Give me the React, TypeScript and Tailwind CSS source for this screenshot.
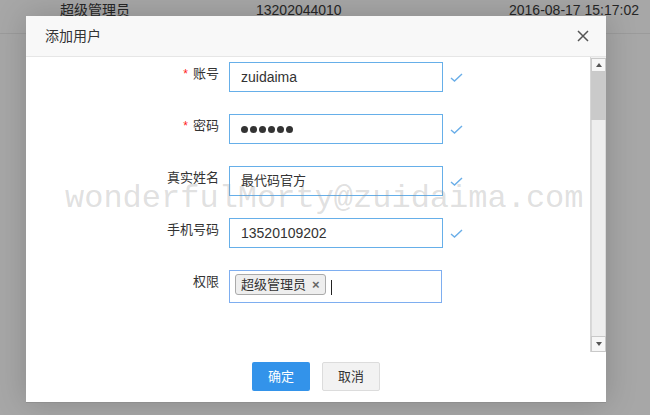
import React from "react";

const font = "font-['Liberation_Sans','Noto_Sans_CJK_SC',sans-serif]";

function Check() {
  return (
    <svg width="13" height="9" viewBox="0 0 13 9" className="ml-[7px] shrink-0">
      <path d="M1 5 L4.5 8 L12 1" fill="none" stroke="#6aaee8" strokeWidth="1.4" />
    </svg>
  );
}

function FormRow({
  label,
  required,
  children,
  check = true,
  className = "",
}: {
  label: string;
  required?: boolean;
  children: React.ReactNode;
  check?: boolean;
  className?: string;
}) {
  return (
    <div className={`flex items-start ${className}`}>
      <div className="w-[193px] shrink-0 pt-[2px] text-right text-[13px] leading-[20px] text-[#333]">
        {required && <span className="mr-[5px] text-[12px] text-[#f22]">*</span>}
        {label}
      </div>
      <div className="ml-[10px] flex items-center">
        {children}
        {check && <Check />}
      </div>
    </div>
  );
}

function TextBox({ children }: { children: React.ReactNode }) {
  return (
    <div className="flex h-[30px] w-[214px] items-center border border-[#66afe9] pl-[11px] text-[14px] text-[#333]">
      {children}
    </div>
  );
}

function Scrollbar() {
  return (
    <div className="flex w-[16px] shrink-0 flex-col border-l border-[#d6d6d6] bg-[#f0f0f0] pt-[1px]">
      <div className="flex h-[14px] items-center justify-center border border-[#c9c9c9] bg-[#f6f6f6]">
        <div className="h-0 w-0 border-x-[3.5px] border-b-[4px] border-x-transparent border-b-[#555]" />
      </div>
      <div className="h-[48px] bg-[#cacaca]" />
      <div className="flex-1 border-x border-[#d9d9d9] bg-[#eeeeee]" />
      <div className="flex h-[16px] items-center justify-center border border-[#c9c9c9] bg-[#f6f6f6]">
        <div className="h-0 w-0 border-x-[3.5px] border-t-[4px] border-x-transparent border-t-[#555]" />
      </div>
    </div>
  );
}

export default function App() {
  return (
    <div className={`relative h-[415px] w-[650px] overflow-hidden bg-[#a7a7a7] ${font}`}>
      {/* page behind the overlay */}
      <div className="flex h-[34px] border-b border-[#9b9b9b] pl-[60px] pt-[1px] text-[14px] leading-[18px] text-[#262626]">
        <span className="w-[196px]">超级管理员</span>
        <span className="w-[253px]">13202044010</span>
        <span>2016-08-17 15:17:02</span>
      </div>

      {/* dialog */}
      <div className="absolute left-[26px] top-[16px] flex h-[387px] w-[580px] flex-col bg-white shadow-[0_0_30px_rgba(0,0,0,0.18)]">
        <div className="flex h-[41px] shrink-0 items-center justify-between border-b border-[#e6e6e6] bg-[#f8f8f8] pl-[19px] pr-[17px]">
          <span className="text-[14px] text-[#333]">添加用户</span>
          <svg width="12" height="12" viewBox="0 0 12 12">
            <path d="M1 1 L11 11 M11 1 L1 11" stroke="#555" strokeWidth="1.5" />
          </svg>
        </div>

        <div className="flex h-[295px] shrink-0">
          <div className="flex-1 pt-[5px]">
            <FormRow label="账号" required className="mb-[22px]">
              <TextBox>zuidaima</TextBox>
            </FormRow>
            <FormRow label="密码" required className="mb-[22px]">
              <TextBox>
                <div className="flex gap-[2px]">
                  {[0, 1, 2, 3, 4, 5].map((i) => (
                    <div key={i} className="h-[7px] w-[7px] rounded-full bg-[#333]" />
                  ))}
                </div>
              </TextBox>
            </FormRow>
            <FormRow label="真实姓名" className="mb-[22px]">
              <TextBox>
                <span className="text-[13px]">最代码官方</span>
              </TextBox>
            </FormRow>
            <FormRow label="手机号码" className="mb-[22px]">
              <TextBox>13520109202</TextBox>
            </FormRow>
            <FormRow label="权限" check={false}>
              <div className="flex h-[33px] w-[213px] items-start border border-[#7eaef0] pl-[5px] pt-[3px]">
                <div className="flex h-[21px] items-center rounded-[3px] border border-[#aaa] bg-[#eeeeee] pl-[5px] pr-[5px] text-[13px] text-[#333]">
                  超级管理员
                  <span className="ml-[6px] text-[13px] font-bold text-[#666]">×</span>
                </div>
                <div className="ml-[5px] mt-[6px] h-[15px] w-px bg-[#222]" />
              </div>
            </FormRow>
          </div>
          <Scrollbar />
        </div>

        <div className="flex flex-1 justify-center gap-[12px] border-b border-[#8f8f8f] pt-[10px]">
          <button className="h-[29px] w-[58px] rounded-[2px] bg-[#3393ea] text-[13px] text-white">确定</button>
          <button className="h-[29px] w-[58px] rounded-[2px] border border-[#dcdcdc] bg-[#f2f2f2] text-[13px] text-[#333]">
            取消
          </button>
        </div>
      </div>

      {/* watermark */}
      <div className="pointer-events-none absolute left-[65px] top-[183px] whitespace-nowrap font-['Liberation_Mono',monospace] text-[32px] leading-[32px] text-[rgba(150,150,150,0.3)]">
        wonderfulMorty@zuidaima.com
      </div>
    </div>
  );
}
